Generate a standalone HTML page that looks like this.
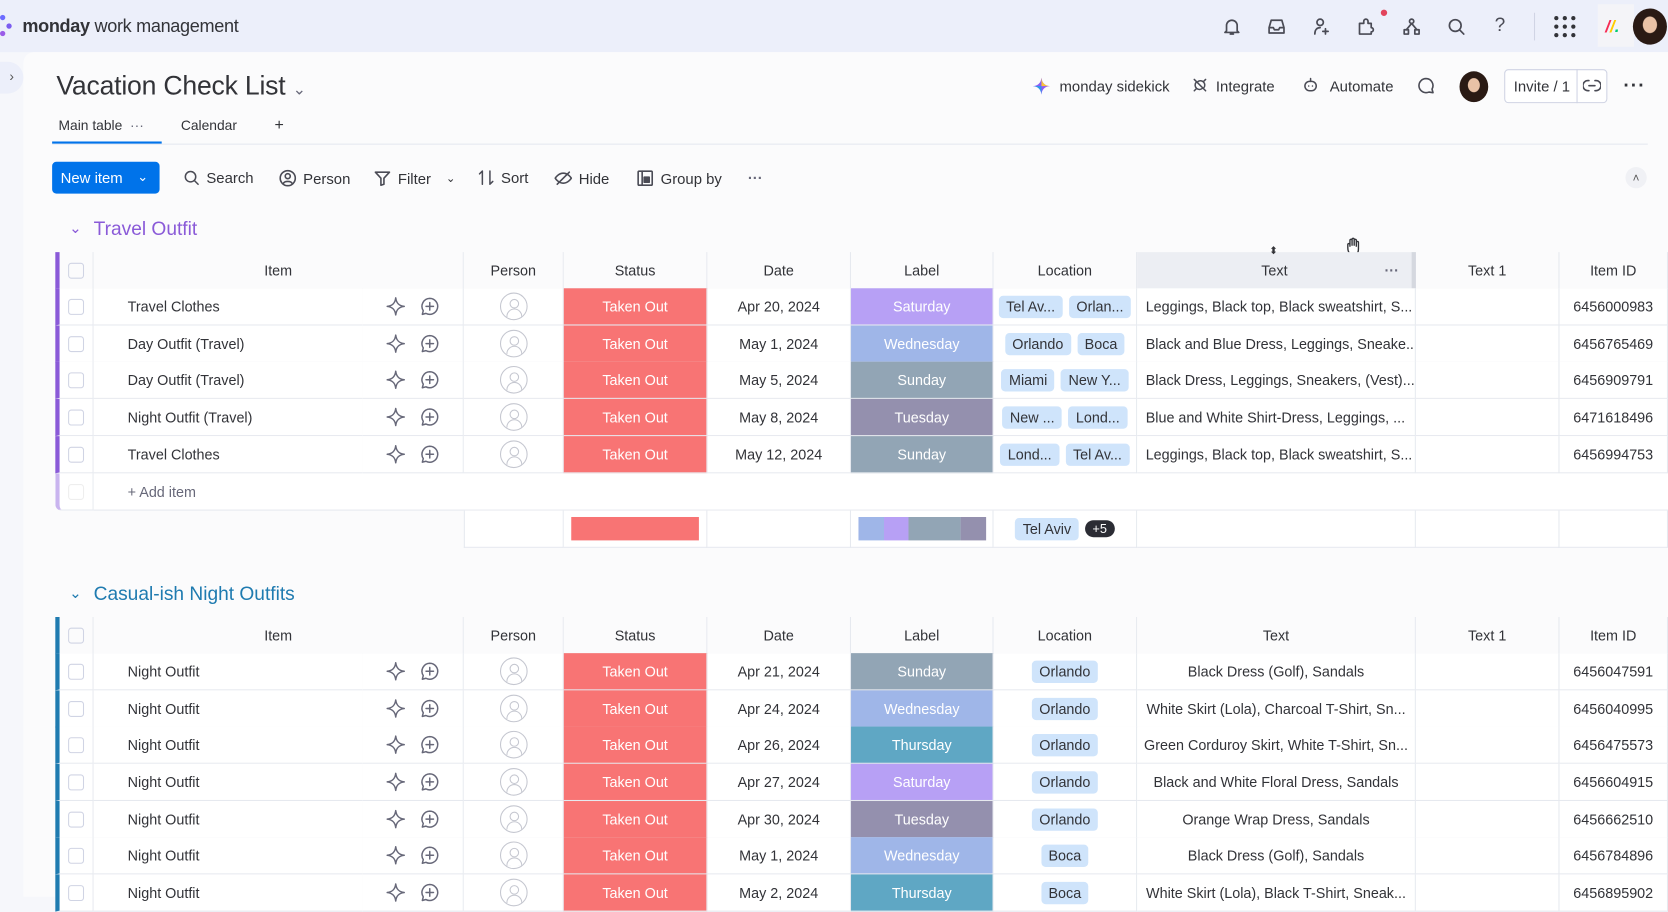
<!DOCTYPE html>
<html><head><meta charset="utf-8">
<style>
*{box-sizing:border-box;margin:0;padding:0}
html,body{width:1668px;height:896px;overflow:hidden;background:#f6f7fb;font-family:"Liberation Sans",sans-serif;color:#323338}
#w{position:absolute;left:0;top:0;width:1568px;height:843px;transform:scale(1.06378);transform-origin:0 0;background:#f6f7fb}
.top{position:absolute;left:0;top:0;width:1568px;height:49px;background:#eceffa}
.main{position:absolute;left:22px;top:49px;right:0;bottom:0;background:#fbfbfc;border-top-left-radius:10px}
.ab{position:absolute}
.ic{position:absolute;width:18px;height:18px;fill:none;stroke:#4a4b55;stroke-width:1.6;stroke-linecap:round;stroke-linejoin:round}
.tb{position:absolute;top:159px;font-size:14px;color:#323338;display:flex;align-items:center;gap:6px}
.row{position:absolute;left:52px;height:35px;display:flex;font-size:13.5px}
.row>div{height:100%;border-bottom:1px solid #e6e9ef;border-right:1px solid #e6e9ef;display:flex;align-items:center;justify-content:center;white-space:nowrap;overflow:hidden;background:#fff}
.c0{width:36px;border-left:4px solid #8a5ad8}
.c1{width:253px;justify-content:flex-start!important;padding-left:32px;border-right:none!important}
.c2{width:95px;gap:12px}
.c2 svg{width:20px;height:20px;fill:none;stroke:#676879;stroke-width:1.4;stroke-linejoin:round;stroke-linecap:round}
.c3{width:94px}.c4{width:135px}.c5{width:135px}.c6{width:134px}.c7{width:135px;gap:6px}.c8{width:262px;padding:0 6px}.c9{width:135px}.c10{width:102px}
.cb{width:15px;height:15px;border:1px solid #d0d4e4;border-radius:3px}
.st{background:#f87474!important;color:#fff}
.chip{background:#cfe4fb;border-radius:4px;padding:3px 7px;font-size:13.5px;color:#323338}
.hdr>div{background:#fbfbfc}
.av{width:26px;height:26px;border:1.5px solid #c5c7d0;border-radius:50%;position:relative}
.av:before{content:"";position:absolute;left:8px;top:5px;width:7px;height:7px;border:1.5px solid #c5c7d0;border-radius:50%}
.av:after{content:"";position:absolute;left:5px;top:14px;width:13px;height:7px;border:1.5px solid #c5c7d0;border-radius:8px 8px 0 0;border-bottom:none}
.sat{background:#b7a0f5!important;color:#fff}.wed{background:#9fb6e8!important;color:#fff}.sun{background:#92a5b5!important;color:#fff}.tue{background:#9490ae!important;color:#fff}.thu{background:#5fa7c4!important;color:#fff}
.tl{justify-content:flex-start!important;padding-left:8px}
.g2 .c0{border-left-color:#1f7bb0}
</style></head><body><div id="w">
<svg width="0" height="0" style="position:absolute"><defs>
<symbol id="st" viewBox="0 0 20 20"><path d="M10 2C10.6 7 13 9.4 18 10 13 10.6 10.6 13 10 18 9.4 13 7 10.6 2 10 7 9.4 9.4 7 10 2z"/></symbol>
<symbol id="cm" viewBox="0 0 20 20"><path d="M10 2.5a7.5 7.5 0 1 1-3.6 14.1L3 17.5l.9-3.4A7.5 7.5 0 0 1 10 2.5zM10 6.5v7M6.5 10h7"/></symbol>
</defs></svg>
<div class="top"></div>
<div class="ab" style="left:0;top:14px;width:12px;height:22px">
<div class="ab" style="left:0;top:0;width:5px;height:5px;border-radius:50%;background:#6c6cff"></div>
<div class="ab" style="left:6px;top:8px;width:5px;height:5px;border-radius:50%;background:#7b5cf0"></div>
<div class="ab" style="left:0;top:15px;width:5px;height:5px;border-radius:50%;background:#9a5ce8"></div>
</div>
<div class="ab" style="left:21px;top:15px;font-size:17px;color:#323338;letter-spacing:-0.3px"><b>monday</b> work management</div>
<svg class="ic" style="left:1149px;top:16px" viewBox="0 0 18 18"><path d="M4 13V8a5 5 0 0 1 10 0v5l1.5 1.5h-13zM7.5 16h3"/></svg>
<svg class="ic" style="left:1191px;top:16px" viewBox="0 0 18 18"><path d="M2 10l2-7h10l2 7v5H2zM2 10h4l1 2h4l1-2h4"/></svg>
<svg class="ic" style="left:1233px;top:16px" viewBox="0 0 18 18"><circle cx="8" cy="5" r="3"/><path d="M3 16c0-4 2-6 5-6M13 11v5M10.5 13.5h5"/></svg>
<svg class="ic" style="left:1275px;top:16px" viewBox="0 0 18 18"><path d="M3 6h4V4a2 2 0 0 1 4 0v2h3v4a2 2 0 0 1 0 4v2H3z"/></svg>
<div class="ab" style="left:1298px;top:9px;width:6px;height:6px;border-radius:50%;background:#e2445c"></div>
<svg class="ic" style="left:1318px;top:16px" viewBox="0 0 18 18"><circle cx="9" cy="4" r="2"/><path d="M9 6L4 12M9 6l5 6"/><rect x="2" y="12" width="4" height="4"/><rect x="12" y="12" width="4" height="4"/></svg>
<svg class="ic" style="left:1360px;top:16px" viewBox="0 0 18 18"><circle cx="8" cy="8" r="5.5"/><path d="M12 12l4 4"/></svg>
<div class="ab" style="left:1405px;top:13px;font-size:18px;color:#4a4b55">?</div>
<div class="ab" style="left:1442px;top:12px;width:1px;height:26px;background:#d0d4e4"></div>
<div class="ab" style="left:1461px;top:15px;width:20px;height:20px;display:grid;grid-template-columns:repeat(3,4px);gap:4px">
<i style="background:#323338;border-radius:50%;height:4px"></i><i style="background:#323338;border-radius:50%;height:4px"></i><i style="background:#323338;border-radius:50%;height:4px"></i><i style="background:#323338;border-radius:50%;height:4px"></i><i style="background:#323338;border-radius:50%;height:4px"></i><i style="background:#323338;border-radius:50%;height:4px"></i><i style="background:#323338;border-radius:50%;height:4px"></i><i style="background:#323338;border-radius:50%;height:4px"></i><i style="background:#323338;border-radius:50%;height:4px"></i></div>
<div class="ab" style="left:1502px;top:4px;width:34px;height:40px;background:#f4f4f8"></div>
<div class="ab" style="left:1509px;top:17px;font-size:16px;font-weight:bold;font-style:italic"><span style="color:#f62b54">/</span><span style="color:#ffcb00">/</span><span style="color:#00ca72">.</span></div>
<div class="ab" style="left:1535px;top:8px;width:32px;height:34px;border-radius:50%;background:radial-gradient(ellipse at 50% 45%,#e9c2a6 0 28%,#2a1a14 31%)"></div>
<div class="main"></div>
<div class="ab" style="left:0;top:58px;width:22px;height:30px;background:#eceffa;border-radius:0 15px 15px 0;font-size:13px;text-align:center;line-height:28px;color:#555">›</div>
<div class="ab" style="left:53px;top:67px;font-size:25px;color:#323338;letter-spacing:-0.2px">Vacation Check List <span style="font-size:15px;color:#676879">⌄</span></div>
<div class="ab" style="left:55px;top:110px;font-size:13px">Main table &nbsp;<span style="color:#676879">···</span></div>
<div class="ab" style="left:170px;top:110px;font-size:13px">Calendar</div>
<div class="ab" style="left:258px;top:109px;font-size:15px">+</div>
<div class="ab" style="left:49px;top:135px;width:1500px;height:1px;background:#e6e9ef"></div>
<div class="ab" style="left:49px;top:133px;width:103px;height:2px;background:#0073ea"></div>
<svg class="ab" style="left:970px;top:72px;width:18px;height:18px" viewBox="0 0 18 18"><path d="M9 1C9.5 6 12 8.5 17 9 12 9.5 9.5 12 9 17 8.5 12 6 9.5 1 9 6 8.5 8.5 6 9 1z" fill="#8b5cf6"/><path d="M9 1C9.5 6 12 8.5 17 9H9z" fill="#f9c33a"/><path d="M1 9C6 9.5 8.5 12 9 17V9z" fill="#2b9be8"/></svg>
<div class="ab" style="left:996px;top:73px;font-size:14px">monday sidekick</div>
<svg class="ic" style="left:1120px;top:72px;width:16px;height:16px" viewBox="0 0 18 18"><path d="M3 3l12 12M5 6a4 4 0 0 0 7 6M13 12a4 4 0 0 0-7-6M3 15l2-2M13 5l2-2"/></svg>
<div class="ab" style="left:1143px;top:73px;font-size:14px">Integrate</div>
<svg class="ic" style="left:1224px;top:72px;width:16px;height:16px" viewBox="0 0 18 18"><rect x="3" y="5" width="12" height="10" rx="5"/><path d="M9 2v3M7 10h.01M11 10h.01"/></svg>
<div class="ab" style="left:1250px;top:73px;font-size:14px">Automate</div>
<svg class="ic" style="left:1332px;top:72px;width:17px;height:17px" viewBox="0 0 18 18"><path d="M9 2a7 7 0 1 0 0 14c1 0 2-.2 3-.6L16 16l-1-3.5A7 7 0 0 0 9 2z"/></svg>
<div class="ab" style="left:1372px;top:67px;width:27px;height:29px;border-radius:50%;background:radial-gradient(ellipse at 50% 45%,#e9c2a6 0 28%,#2a1a14 31%)"></div>
<div class="ab" style="left:1414px;top:65px;width:97px;height:32px;border:1px solid #d0d4e4;border-radius:4px;background:#fff"></div>
<div class="ab" style="left:1482px;top:65px;width:1px;height:32px;background:#d0d4e4"></div>
<div class="ab" style="left:1423px;top:73px;font-size:14px">Invite / 1</div>
<svg class="ic" style="left:1488px;top:72px;width:17px;height:17px" viewBox="0 0 18 18"><path d="M6 4H5a5 5 0 0 0 0 10h1M12 4h1a5 5 0 0 1 0 10h-1M6 9h6"/></svg>
<div class="ab" style="left:1526px;top:70px;font-size:18px;font-weight:bold;color:#323338;letter-spacing:1px">···</div>
<div class="ab" style="left:49px;top:152px;width:101px;height:30px;background:#0073ea;border-radius:4px;color:#fff;font-size:14px;line-height:30px;padding-left:8px">New item <span style="position:absolute;left:80px;top:-1px;font-size:12px">⌄</span></div>
<div class="tb" style="left:172px"><svg class="ic" style="position:static;width:16px;height:16px" viewBox="0 0 18 18"><circle cx="8" cy="8" r="5.5"/><path d="M12 12l4 4"/></svg>Search</div>
<div class="tb" style="left:262px"><svg class="ic" style="position:static;width:17px;height:17px" viewBox="0 0 18 18"><circle cx="9" cy="9" r="7.5"/><circle cx="9" cy="7" r="2.5"/><path d="M4.5 14.5c1-3 8-3 9 0"/></svg>Person</div>
<div class="tb" style="left:351px"><svg class="ic" style="position:static;width:17px;height:17px" viewBox="0 0 18 18"><path d="M2 3h14l-5.5 6v6l-3 1V9z"/></svg>Filter <span style="font-size:11px;margin-left:8px">⌄</span></div>
<div class="tb" style="left:449px"><svg class="ic" style="position:static;width:16px;height:16px" viewBox="0 0 18 18"><path d="M5 16V2L2 5M13 2v14l3-3"/></svg>Sort</div>
<div class="tb" style="left:521px"><svg class="ic" style="position:static;width:17px;height:17px" viewBox="0 0 18 18"><path d="M1 9s3-5 8-5 8 5 8 5-3 5-8 5-8-5-8-5zM3 15L15 3"/></svg>Hide</div>
<div class="tb" style="left:598px"><svg class="ic" style="position:static;width:17px;height:17px" viewBox="0 0 18 18"><rect x="2" y="2" width="14" height="14" rx="1"/><path d="M6 2v14"/><rect x="8" y="8" width="5" height="5" fill="#4a4b55"/></svg>Group by</div>
<div class="tb" style="left:703px;font-weight:bold;color:#676879">···</div>
<div class="ab" style="left:1528px;top:157px;width:20px;height:20px;border-radius:50%;background:#f0f1f5;font-size:11px;text-align:center;line-height:22px;color:#555">˄</div>

<div class="ab" style="left:65px;top:206px;font-size:14px;color:#8a5ad8">⌄</div>
<div class="ab" style="left:88px;top:205px;font-size:18px;color:#8a5ad8">Travel Outfit</div>
<svg class="ab" style="left:1264px;top:222px;width:20px;height:20px;fill:#fff;stroke:#323338;stroke-width:1.3" viewBox="0 0 20 20"><path d="M6 18c-2-2-3-4-3-7V8a1 1 0 0 1 2 0v2V4a1 1 0 0 1 2 0v5V3a1 1 0 0 1 2 0v6V4a1 1 0 0 1 2 0v6V6a1 1 0 0 1 2 0v6c0 3-1 5-3 6z"/></svg>

<div class="row hdr" style="top:237px"><div class="c0"><span class="cb"></span></div><div class="c1" style="justify-content:center!important;padding-left:0;width:348px;border-right:1px solid #e6e9ef!important">Item</div><div class="c3">Person</div><div class="c4">Status</div><div class="c5">Date</div><div class="c6">Label</div><div class="c7">Location</div><div class="c8" style="background:#eceef3!important;position:relative;border-right:4px solid #d5d8df;overflow:visible">Text<span style="position:absolute;right:12px;color:#676879;font-weight:bold">···</span><span style="position:absolute;top:-6px;left:124px;font-size:10px">⬍</span></div><div class="c9">Text 1</div><div class="c10">Item ID</div></div>

<div class="row" style="top:271px"><div class="c0"><span class="cb"></span></div><div class="c1">Travel Clothes</div><div class="c2"><svg><use href="#st"/></svg><svg><use href="#cm"/></svg></div><div class="c3"><span class="av"></span></div><div class="c4 st">Taken Out</div><div class="c5">Apr 20, 2024</div><div class="c6 sat">Saturday</div><div class="c7"><span class="chip">Tel Av...</span><span class="chip">Orlan...</span></div><div class="c8 tl">Leggings, Black top, Black sweatshirt, S...</div><div class="c9"></div><div class="c10">6456000983</div></div>
<div class="row" style="top:306px"><div class="c0"><span class="cb"></span></div><div class="c1">Day Outfit (Travel)</div><div class="c2"><svg><use href="#st"/></svg><svg><use href="#cm"/></svg></div><div class="c3"><span class="av"></span></div><div class="c4 st">Taken Out</div><div class="c5">May 1, 2024</div><div class="c6 wed">Wednesday</div><div class="c7"><span class="chip">Orlando</span><span class="chip">Boca</span></div><div class="c8 tl">Black and Blue Dress, Leggings, Sneake...</div><div class="c9"></div><div class="c10">6456765469</div></div>
<div class="row" style="top:340px"><div class="c0"><span class="cb"></span></div><div class="c1">Day Outfit (Travel)</div><div class="c2"><svg><use href="#st"/></svg><svg><use href="#cm"/></svg></div><div class="c3"><span class="av"></span></div><div class="c4 st">Taken Out</div><div class="c5">May 5, 2024</div><div class="c6 sun">Sunday</div><div class="c7"><span class="chip">Miami</span><span class="chip">New Y...</span></div><div class="c8 tl">Black Dress, Leggings, Sneakers, (Vest)...</div><div class="c9"></div><div class="c10">6456909791</div></div>
<div class="row" style="top:375px"><div class="c0"><span class="cb"></span></div><div class="c1">Night Outfit (Travel)</div><div class="c2"><svg><use href="#st"/></svg><svg><use href="#cm"/></svg></div><div class="c3"><span class="av"></span></div><div class="c4 st">Taken Out</div><div class="c5">May 8, 2024</div><div class="c6 tue">Tuesday</div><div class="c7"><span class="chip">New ...</span><span class="chip">Lond...</span></div><div class="c8 tl">Blue and White Shirt-Dress, Leggings, ...</div><div class="c9"></div><div class="c10">6471618496</div></div>
<div class="row" style="top:410px"><div class="c0"><span class="cb"></span></div><div class="c1">Travel Clothes</div><div class="c2"><svg><use href="#st"/></svg><svg><use href="#cm"/></svg></div><div class="c3"><span class="av"></span></div><div class="c4 st">Taken Out</div><div class="c5">May 12, 2024</div><div class="c6 sun">Sunday</div><div class="c7"><span class="chip">Lond...</span><span class="chip">Tel Av...</span></div><div class="c8 tl">Leggings, Black top, Black sweatshirt, S...</div><div class="c9"></div><div class="c10">6456994753</div></div>
<div class="row" style="top:445px"><div class="c0" style="border-left-color:#c9b4ef;border-bottom-left-radius:6px"><span class="cb" style="border-color:#eee"></span></div><div style="width:1480px;justify-content:flex-start;padding-left:32px;color:#676879;border-right:none">+ Add item</div></div>
<div class="row" style="top:480px;left:436px"><div class="c3" style="border-left:1px solid #e6e9ef"></div><div class="c4"><span style="width:120px;height:22px;background:#f87474"></span></div><div class="c5"></div><div class="c6"><span style="width:24px;height:22px;background:#9fb6e8"></span><span style="width:23px;height:22px;background:#b7a0f5"></span><span style="width:49px;height:22px;background:#92a5b5"></span><span style="width:24px;height:22px;background:#9490ae"></span></div><div class="c7"><span class="chip">Tel Aviv</span><span style="background:#2b2c34;color:#fff;border-radius:10px;padding:1px 7px;font-size:12px">+5</span></div><div class="c8"></div><div class="c9"></div><div class="c10"></div></div>

<div class="ab" style="left:65px;top:549px;font-size:14px;color:#1f7bb0">⌄</div>
<div class="ab" style="left:88px;top:548px;font-size:18px;color:#1f7bb0">Casual-ish Night Outfits</div>
<div class="g2">
<div class="row hdr" style="top:580px"><div class="c0"><span class="cb"></span></div><div class="c1" style="justify-content:center!important;padding-left:0;width:348px;border-right:1px solid #e6e9ef!important">Item</div><div class="c3">Person</div><div class="c4">Status</div><div class="c5">Date</div><div class="c6">Label</div><div class="c7">Location</div><div class="c8">Text</div><div class="c9">Text 1</div><div class="c10">Item ID</div></div>
<div class="row" style="top:614px"><div class="c0"><span class="cb"></span></div><div class="c1">Night Outfit</div><div class="c2"><svg><use href="#st"/></svg><svg><use href="#cm"/></svg></div><div class="c3"><span class="av"></span></div><div class="c4 st">Taken Out</div><div class="c5">Apr 21, 2024</div><div class="c6 sun">Sunday</div><div class="c7"><span class="chip">Orlando</span></div><div class="c8">Black Dress (Golf), Sandals</div><div class="c9"></div><div class="c10">6456047591</div></div>
<div class="row" style="top:649px"><div class="c0"><span class="cb"></span></div><div class="c1">Night Outfit</div><div class="c2"><svg><use href="#st"/></svg><svg><use href="#cm"/></svg></div><div class="c3"><span class="av"></span></div><div class="c4 st">Taken Out</div><div class="c5">Apr 24, 2024</div><div class="c6 wed">Wednesday</div><div class="c7"><span class="chip">Orlando</span></div><div class="c8">White Skirt (Lola), Charcoal T-Shirt, Sn...</div><div class="c9"></div><div class="c10">6456040995</div></div>
<div class="row" style="top:683px"><div class="c0"><span class="cb"></span></div><div class="c1">Night Outfit</div><div class="c2"><svg><use href="#st"/></svg><svg><use href="#cm"/></svg></div><div class="c3"><span class="av"></span></div><div class="c4 st">Taken Out</div><div class="c5">Apr 26, 2024</div><div class="c6 thu">Thursday</div><div class="c7"><span class="chip">Orlando</span></div><div class="c8">Green Corduroy Skirt, White T-Shirt, Sn...</div><div class="c9"></div><div class="c10">6456475573</div></div>
<div class="row" style="top:718px"><div class="c0"><span class="cb"></span></div><div class="c1">Night Outfit</div><div class="c2"><svg><use href="#st"/></svg><svg><use href="#cm"/></svg></div><div class="c3"><span class="av"></span></div><div class="c4 st">Taken Out</div><div class="c5">Apr 27, 2024</div><div class="c6 sat">Saturday</div><div class="c7"><span class="chip">Orlando</span></div><div class="c8">Black and White Floral Dress, Sandals</div><div class="c9"></div><div class="c10">6456604915</div></div>
<div class="row" style="top:753px"><div class="c0"><span class="cb"></span></div><div class="c1">Night Outfit</div><div class="c2"><svg><use href="#st"/></svg><svg><use href="#cm"/></svg></div><div class="c3"><span class="av"></span></div><div class="c4 st">Taken Out</div><div class="c5">Apr 30, 2024</div><div class="c6 tue">Tuesday</div><div class="c7"><span class="chip">Orlando</span></div><div class="c8">Orange Wrap Dress, Sandals</div><div class="c9"></div><div class="c10">6456662510</div></div>
<div class="row" style="top:787px"><div class="c0"><span class="cb"></span></div><div class="c1">Night Outfit</div><div class="c2"><svg><use href="#st"/></svg><svg><use href="#cm"/></svg></div><div class="c3"><span class="av"></span></div><div class="c4 st">Taken Out</div><div class="c5">May 1, 2024</div><div class="c6 wed">Wednesday</div><div class="c7"><span class="chip">Boca</span></div><div class="c8">Black Dress (Golf), Sandals</div><div class="c9"></div><div class="c10">6456784896</div></div>
<div class="row" style="top:822px"><div class="c0"><span class="cb"></span></div><div class="c1">Night Outfit</div><div class="c2"><svg><use href="#st"/></svg><svg><use href="#cm"/></svg></div><div class="c3"><span class="av"></span></div><div class="c4 st">Taken Out</div><div class="c5">May 2, 2024</div><div class="c6 thu">Thursday</div><div class="c7"><span class="chip">Boca</span></div><div class="c8">White Skirt (Lola), Black T-Shirt, Sneak...</div><div class="c9"></div><div class="c10">6456895902</div></div>
</div>
</div></body></html>
